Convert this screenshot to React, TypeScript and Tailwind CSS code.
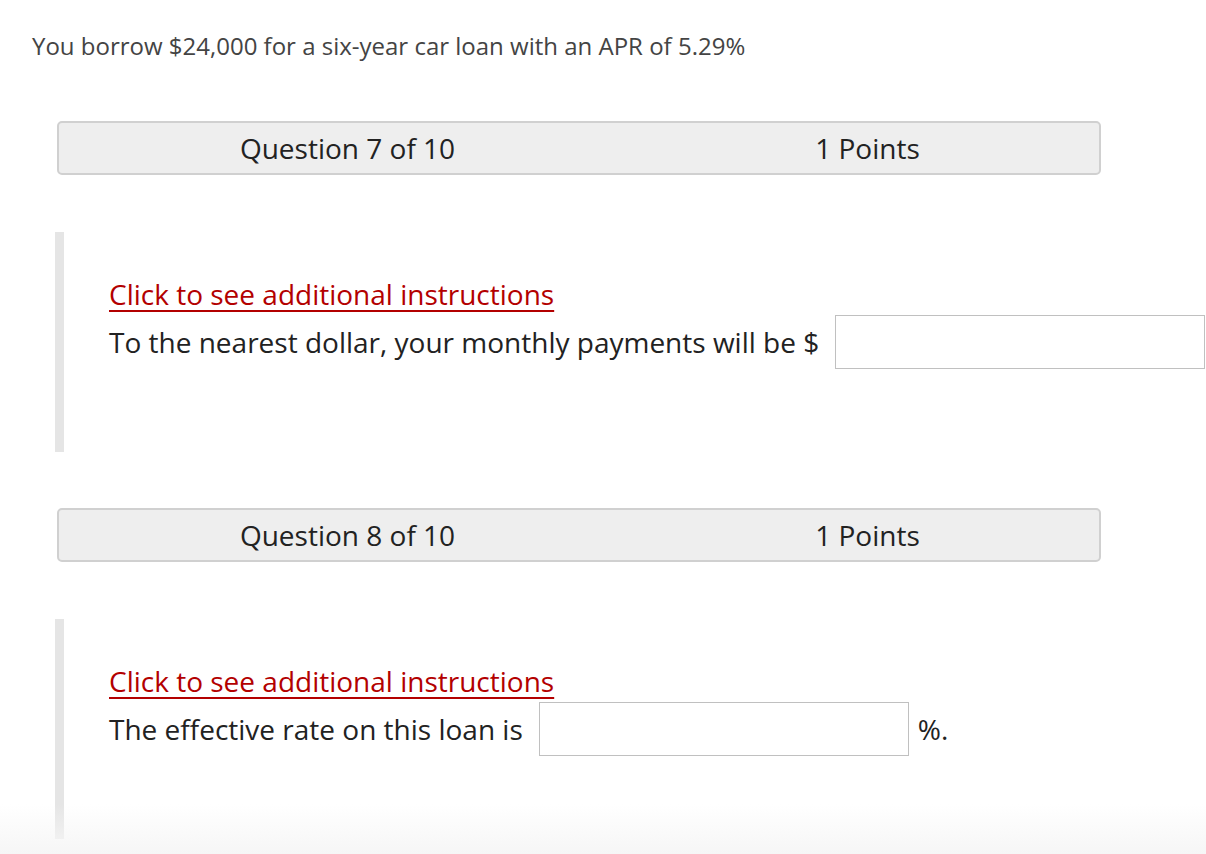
import React from 'react';

interface QuestionProps {
  number: number;
  total: number;
  points: number;
  children: React.ReactNode;
}

const font = { fontFamily: '"Open Sans", "Noto Sans", sans-serif' };

const QuestionHeader: React.FC<{ number: number; total: number; points: number }> = ({ number, total, points }) => (
  <div className="ml-[57px] w-[1044px] h-[54px] flex items-center rounded-[5px] border-2 border-[#d0d0d0] bg-[#eeeeee] text-[28px] text-[#222222]">
    <span className="w-[577px] text-center">Question {number} of {total}</span>
    <span className="flex-1 text-center">{points} Points</span>
  </div>
);

const Question: React.FC<QuestionProps> = ({ number, total, points, children }) => (
  <section>
    <QuestionHeader number={number} total={total} points={points} />
    <div className="mt-[57px] ml-[55px] border-l-[9px] border-[#e5e5e5] pl-[45px] pt-[42px] pb-[83px]">
      <a href="#" className="block h-[40px] leading-[40px] text-[28px] text-[#b30000] underline underline-offset-[5px] decoration-[2px] w-fit">
        Click to see additional instructions
      </a>
      <div className="mt-[1px] flex items-center text-[28px] text-[#222222]">{children}</div>
    </div>
  </section>
);

const AnswerBox: React.FC<{ width: string }> = ({ width }) => (
  <input type="text" className={`${width} h-[54px] border border-[#c0c0c0] bg-white outline-none`} />
);

export default function App() {
  return (
    <div className="relative min-h-[854px] bg-white overflow-hidden" style={font}>
      <p className="pl-[32px] pt-[30px] h-[121px] text-[24px] leading-[32px] text-[#444444]">
        You borrow $24,000 for a six-year car loan with an APR of 5.29%
      </p>

      <Question number={7} total={10} points={1}>
        <span>To the nearest dollar, your monthly payments will be $</span>
        <span className="ml-[16px]">
          <AnswerBox width="w-[370px]" />
        </span>
      </Question>

      <div className="mt-[56px]">
        <Question number={8} total={10} points={1}>
          <span>The effective rate on this loan is</span>
          <span className="ml-[16px]">
            <AnswerBox width="w-[370px]" />
          </span>
          <span className="ml-[9px]">%.</span>
        </Question>
      </div>

      {/* soft fade at the bottom edge of the viewport */}
      <div className="pointer-events-none absolute bottom-0 left-0 right-0 h-[50px] bg-gradient-to-b from-transparent to-[#f6f6f6]" />
    </div>
  );
}
